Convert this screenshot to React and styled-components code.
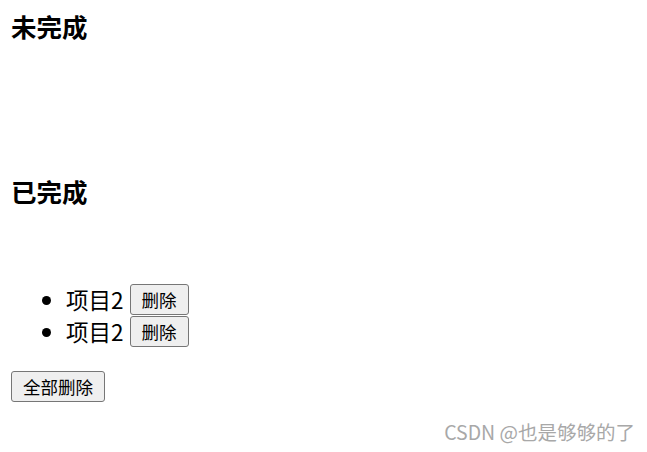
import React from "react";
import styled, { createGlobalStyle } from "styled-components";

const Global = createGlobalStyle`
  html, body { margin: 0; padding: 0; background: #fff; }
  body { font-family: "Noto Sans CJK SC", "Noto Sans", sans-serif; color: #000; }
`;

const Page = styled.div`
  position: relative;
  width: 647px;
  height: 452px;
  padding: 10px 11px 0 11px;
  box-sizing: border-box;
`;

const Heading = styled.h3`
  margin: 0 0 ${(p) => p.$gap}px 0;
  font-size: 25.5px;
  font-weight: 700;
  line-height: 31px;
  height: 31px;
`;

const List = styled.ul`
  margin: 0 0 23px 0;
  padding: 0 0 0 55px;
  list-style: disc;
  font-size: 22.5px;
`;

const Item = styled.li`
  height: 32px;
  line-height: 30px;
`;

const Btn = styled.button`
  font-family: "Noto Sans CJK SC", sans-serif;
  font-size: 17.5px;
  height: 31px;
  padding: 0 11px;
  background: #efefef;
  border: 1px solid #767676;
  border-radius: 3px;
  color: #000;
  vertical-align: top;
  line-height: 29px;
  margin-left: ${(p) => (p.$inline ? 6 : 0)}px;
`;

const Watermark = styled.div`
  position: absolute;
  right: 12px;
  top: 419px;
  font-family: "Noto Sans CJK SC", sans-serif;
  font-size: 19.5px;
  color: #a8a8a8;
  line-height: 26px;
`;

export default function App() {
  return (
    <>
      <Global />
      <Page>
        <Heading $gap={134}>未完成</Heading>
        <Heading $gap={78}>已完成</Heading>
        <List>
          <Item>
            项目2<Btn $inline>删除</Btn>
          </Item>
          <Item>
            项目2<Btn $inline>删除</Btn>
          </Item>
        </List>
        <Btn>全部删除</Btn>
        <Watermark>CSDN @也是够够的了</Watermark>
      </Page>
    </>
  );
}
